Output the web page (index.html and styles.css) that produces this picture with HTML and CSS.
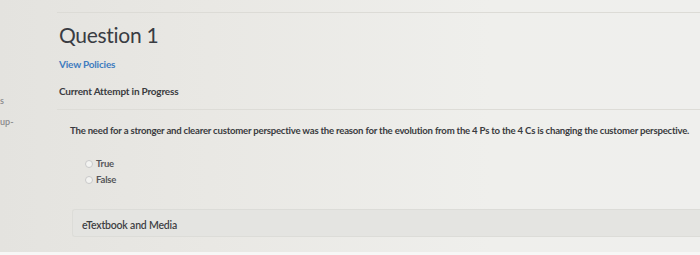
FILE: index.html
```html
<!DOCTYPE html>
<html>
<head>
<meta charset="utf-8">
<link rel="stylesheet" href="styles.css">
</head>
<body>
<div class="page">
  <aside class="side">
    <div class="side-item side-s">s</div>
    <div class="side-item side-up">up-</div>
  </aside>
  <main class="main">
    <div class="top-rule"></div>
    <h1 class="title">Question 1</h1>
    <a class="policies">View Policies</a>
    <div class="attempt">Current Attempt in Progress</div>
    <div class="rule"></div>
    <p class="question">The need for a stronger and clearer customer perspective was the reason for the evolution from the 4 Ps to the 4 Cs is changing the customer perspective.</p>
    <div class="options">
      <label class="option"><span class="radio"></span>True</label>
      <label class="option"><span class="radio"></span>False</label>
    </div>
    <div class="media">eTextbook and Media</div>
  </main>
</div>
<div class="bottom-strip"></div>
</body>
</html>
```
FILE: styles.css
```css
html, body {
  margin: 0;
  padding: 0;
}
body {
  width: 700px;
  height: 255px;
  overflow: hidden;
  font-family: Lato, "Open Sans", sans-serif;
  background: linear-gradient(90deg, #e4e3df 0%, #e9e8e4 30%, #efefec 70%, #efefed 100%);
}
.page {
  display: flex;
  height: 252px;
}
.side {
  width: 55px;
  padding-top: 95px;
  color: #8a8a8c;
  font-size: 9px;
  font-weight: 600;
}
.side-item {
  height: 21px;
}
.main {
  flex: 1;
  padding-top: 12px;
}
.top-rule {
  height: 1px;
  background: #dcdbd6;
  margin-left: 2px;
}
.title {
  margin: 9px 0 0 4px;
  font-size: 21px;
  font-weight: 400;
  color: #393c43;
  line-height: 25px;
  letter-spacing: -0.3px;
}
.policies {
  display: block;
  margin: 10px 0 0 4px;
  font-size: 10px;
  font-weight: 700;
  color: #3f7cbf;
  line-height: 14px;
  letter-spacing: -0.2px;
}
.attempt {
  margin: 13px 0 0 4px;
  font-size: 10px;
  font-weight: 700;
  color: #3a3b3f;
  line-height: 14px;
  letter-spacing: -0.2px;
}
.rule {
  height: 1px;
  background: #dddcd7;
  margin: 11px 0 0 2px;
}
.question {
  margin: 14px 0 0 15px;
  font-size: 9.6px;
  font-weight: 700;
  color: #3a3b40;
  line-height: 14px;
  letter-spacing: -0.22px;
  white-space: nowrap;
}
.options {
  margin: 19px 0 0 30px;
  display: flex;
  flex-direction: column;
  gap: 2px;
}
.option {
  display: flex;
  align-items: center;
  gap: 3px;
  font-size: 9.5px;
  font-weight: 700;
  color: #55565a;
  line-height: 14px;
  letter-spacing: -0.2px;
}
.radio {
  width: 8px;
  height: 8px;
  border-radius: 50%;
  border: 1px solid #c9c9c9;
  background: #f3f3f1;
  box-sizing: border-box;
}
.media {
  margin: 22px 0 0 17px;
  height: 28px;
  background: #e4e4e1;
  border: 1px solid #dcdcd8;
  border-right: none;
  border-radius: 3px 0 0 3px;
  box-sizing: border-box;
  padding: 3px 0 0 9px;
  display: flex;
  align-items: center;
  font-size: 10.5px;
  font-weight: 600;
  color: #3e3f44;
  letter-spacing: -0.2px;
}
.bottom-strip {
  height: 3px;
  background: #f7f7f6;
}
```
